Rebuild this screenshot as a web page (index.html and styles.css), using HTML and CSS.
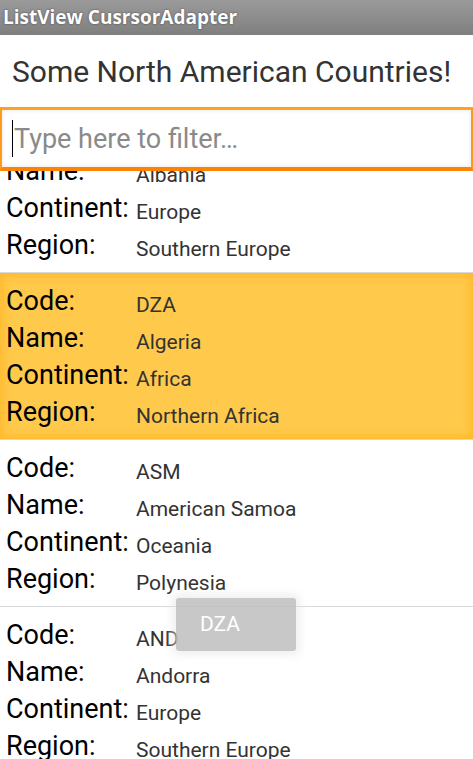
FILE: index.html
```html
<!DOCTYPE html>
<html>
<head>
<meta charset="utf-8">
<link rel="stylesheet" href="styles.css">
</head>
<body>
<div class="screen">
  <header class="titlebar">ListView CusrsorAdapter</header>
  <h1 class="heading">Some North American Countries!</h1>
  <div class="filter"><span class="caret"></span><span class="placeholder">Type here to filter…</span></div>
  <div class="list">
    <div class="row first">
      <div class="line"><span class="label">Name:</span><span class="value">Albania</span></div>
      <div class="line"><span class="label">Continent:</span><span class="value">Europe</span></div>
      <div class="line"><span class="label">Region:</span><span class="value">Southern Europe</span></div>
    </div>
    <div class="row selected">
      <div class="line"><span class="label">Code:</span><span class="value">DZA</span></div>
      <div class="line"><span class="label">Name:</span><span class="value">Algeria</span></div>
      <div class="line"><span class="label">Continent:</span><span class="value">Africa</span></div>
      <div class="line"><span class="label">Region:</span><span class="value">Northern Africa</span></div>
    </div>
    <div class="row">
      <div class="line"><span class="label">Code:</span><span class="value">ASM</span></div>
      <div class="line"><span class="label">Name:</span><span class="value">American Samoa</span></div>
      <div class="line"><span class="label">Continent:</span><span class="value">Oceania</span></div>
      <div class="line"><span class="label">Region:</span><span class="value">Polynesia</span></div>
    </div>
    <div class="row">
      <div class="line"><span class="label">Code:</span><span class="value">AND</span></div>
      <div class="line"><span class="label">Name:</span><span class="value">Andorra</span></div>
      <div class="line"><span class="label">Continent:</span><span class="value">Europe</span></div>
      <div class="line"><span class="label">Region:</span><span class="value">Southern Europe</span></div>
    </div>
  </div>
  <div class="toast">DZA</div>
</div>
</body>
</html>
```

FILE: styles.css
```css
html, body {
  margin: 0;
  padding: 0;
  background: #fff;
}
.screen {
  position: relative;
  width: 473px;
  height: 759px;
  overflow: hidden;
  display: flex;
  flex-direction: column;
  font-family: Roboto, "Liberation Sans", sans-serif;
}
.titlebar {
  flex: none;
  height: 35px;
  box-sizing: border-box;
  padding: 0 3px;
  line-height: 34px;
  background: linear-gradient(#9a9a9a, #7f7f7f);
  color: #fff;
  font-family: "Open Sans", "DejaVu Sans", sans-serif;
  font-weight: 700;
  font-size: 19px;
  letter-spacing: 0;
  text-shadow: 0 0 2px rgba(0,0,0,0.55);
  white-space: nowrap;
}
.heading {
  flex: none;
  margin: 0;
  height: 72px;
  box-sizing: border-box;
  padding: 1px 12px 0;
  line-height: 71px;
  font-size: 30px;
  font-weight: 400;
  color: #333;
  white-space: nowrap;
}
.filter {
  flex: none;
  height: 64px;
  box-sizing: border-box;
  border-style: solid;
  border-width: 3px 2px 4px 2px;
  border-color: #ffa21e #ff9a18 #ff8200 #ff9a18;
  background: #fff;
  box-shadow: inset 0 0 3px 2px #f3f3f3;
  display: flex;
  align-items: center;
  padding-left: 10px;
}
.caret {
  width: 1px;
  height: 37px;
  background: #000;
  margin-right: 1px;
}
.placeholder {
  font-size: 27px;
  color: #8a8a8a;
  white-space: nowrap;
}
.list {
  flex: 1;
  overflow: hidden;
}
.row {
  padding: 10px 6px 8px;
  border-bottom: 1px solid #d8d8d8;
}
.row.first {
  margin-top: -28px;
}
.row.selected {
  background: #ffc94b;
  box-shadow: inset 0 0 8px 3px #ffb92c;
}
.line {
  height: 37px;
  line-height: 37px;
  white-space: nowrap;
}
.label {
  display: inline-block;
  width: 130px;
  font-size: 27px;
  color: #000;
}
.value {
  font-size: 21px;
  color: #333;
  vertical-align: -2px;
}
.toast {
  position: absolute;
  left: 176px;
  top: 598px;
  width: 120px;
  height: 53px;
  border-radius: 3px;
  background: rgba(190,190,190,0.85);
  box-shadow: 0 0 8px 4px rgba(225,232,225,0.6);
  color: #fff;
  font-size: 21px;
  line-height: 53px;
  text-align: center;
  padding-right: 32px;
  box-sizing: border-box;
}
```
